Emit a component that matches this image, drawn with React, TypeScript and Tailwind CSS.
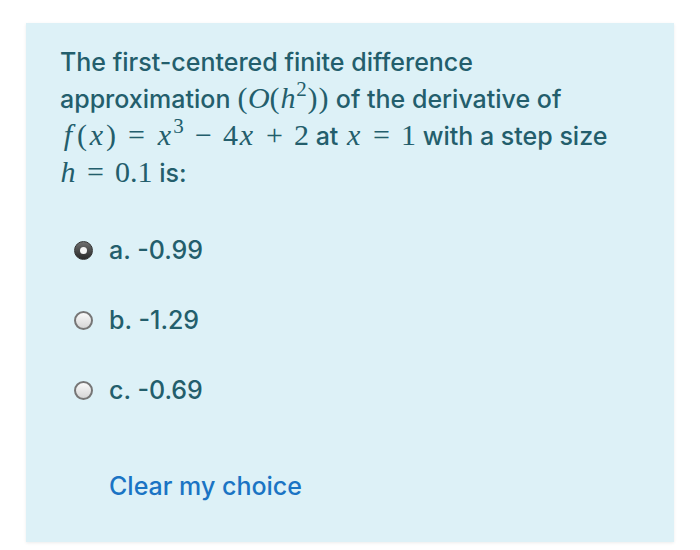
import React from "react";

type C = { children?: React.ReactNode };

const M = ({ children }: C) => (
  <span className="font-['Liberation_Serif',serif] text-[30px] leading-none font-normal whitespace-nowrap">
    {children}
  </span>
);
const F = () => <i className="inline-block w-[16px] text-center">f</i>;
const X = () => <i className="inline-block w-[17px] text-center">x</i>;
const H = () => <i className="inline-block w-[16px] text-center">h</i>;
const O = () => <i className="inline-block w-[21px] text-center">O</i>;
const L = () => <span className="inline-block w-[11px] text-center">(</span>;
const R = () => <span className="inline-block w-[11px] text-center">)</span>;
const L2 = () => <span className="inline-block w-[12px] text-center">(</span>;
const R2 = () => <span className="inline-block w-[12px] text-center">)</span>;
const Rel = ({ children }: C) => <span className="inline-block w-[23px] mx-[8px] text-center">{children}</span>;
const Bin = ({ children }: C) => <span className="inline-block w-[23px] mx-[8px] text-center">{children}</span>;
const Sup = ({ children }: C) => (
  <sup className="text-[21px] leading-none inline-block w-[11px] text-center top-[-0.55em]">{children}</sup>
);

function Radio({ checked }: { checked?: boolean }) {
  if (checked) {
    return (
      <span className="w-[19px] h-[19px] rounded-full bg-gradient-to-b from-[#707070] to-[#2a2a2a] border border-[#333] flex items-center justify-center shrink-0">
        <span className="w-[7px] h-[7px] rounded-full bg-[#f4f4f4]" />
      </span>
    );
  }
  return (
    <span className="w-[19px] h-[19px] rounded-full bg-gradient-to-b from-[#fafafa] to-[#d6d6d6] border-2 border-[#767676] shrink-0" />
  );
}

export default function App() {
  return (
    <div className="w-[700px] h-[550px] bg-white pt-[23px] pl-[26px] font-['Inter',sans-serif]">
      <div className="w-[648px] h-[519px] bg-[#ddf1f7] shadow-[0_1px_3px_rgba(0,0,0,0.08)] pl-[34px] pt-[21px] text-[#235e6c]">
        <div className="text-[25px] font-medium leading-[37px] w-[600px]">
          <div>The first-centered finite difference</div>
          <div className="whitespace-nowrap">
            approximation{" "}
            <M>
              <L />
              <O />
              <L />
              <H />
              <Sup>2</Sup>
              <R />
              <R />
            </M>{" "}
            of the derivative of
          </div>
          <div className="whitespace-nowrap">
            <M>
              <F />
              <L2 />
              <X />
              <R2 />
              <Rel>=</Rel>
              <X />
              <Sup>3</Sup>
              <Bin>−</Bin>4<X />
              <Bin>+</Bin>2
            </M>{" "}
            at{" "}
            <M>
              <X />
              <Rel>=</Rel>1
            </M>{" "}
            with a step size
          </div>
          <div>
            <M>
              <H />
              <Rel>=</Rel>0.1
            </M>{" "}
            is:
          </div>
        </div>
        <div className="mt-[44px] flex flex-col gap-[42px] pl-[14px] text-[25px] font-medium leading-[28px]">
          <div className="flex items-center gap-[16px]">
            <Radio checked />
            <span>a. -0.99</span>
          </div>
          <div className="flex items-center gap-[16px]">
            <Radio />
            <span>b. -1.29</span>
          </div>
          <div className="flex items-center gap-[16px]">
            <Radio />
            <span>c. -0.69</span>
          </div>
        </div>
        <div className="mt-[68px] pl-[49px] text-[25px] leading-[28px] font-medium text-[#1a74c4]">Clear my choice</div>
      </div>
    </div>
  );
}
